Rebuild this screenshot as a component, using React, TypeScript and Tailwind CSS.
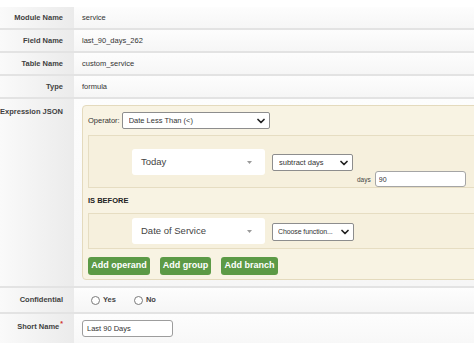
import type { ReactNode } from "react";

// Small chevron used by the native-looking selects
function Chevron() {
  return (
    <svg
      className="pointer-events-none absolute top-1/2 right-[5px] -translate-y-1/2"
      width="8"
      height="6"
      viewBox="0 0 8 6"
    >
      <path d="M1 1.5 L4 4.5 L7 1.5" fill="none" stroke="#222" strokeWidth="1.7" strokeLinecap="round" strokeLinejoin="round" />
    </svg>
  );
}

type SelectBoxProps = {
  value: string;
  className: string;
};

function SelectBox({ value, className }: SelectBoxProps) {
  return (
    <div className={`relative shrink-0 ${className}`}>
      <select
        className="h-full w-full appearance-none rounded-[2px] border border-[#8d8d8d] bg-white pr-[14px] pl-[6px] text-[7.5px] text-[#333] outline-none"
        defaultValue={value}
      >
        <option>{value}</option>
      </select>
      <Chevron />
    </div>
  );
}

function OperandBox({ label }: { label: string }) {
  return (
    <div className="relative flex h-[26px] w-[133px] shrink-0 items-center rounded-[3px] bg-white pl-[9px] text-[9.5px] text-[#444]">
      {label}
      <svg className="absolute top-[12px] right-[13px]" width="5" height="3" viewBox="0 0 5 3">
        <path d="M0 0 L5 0 L2.5 3 Z" fill="#9a9a9a" />
      </svg>
    </div>
  );
}

type RowProps = {
  label: string;
  children?: ReactNode;
  height: string;
  required?: boolean;
  top?: boolean;
};

function Row({ label, children, height, required, top }: RowProps) {
  return (
    <div className={`flex border-b-2 border-[#e3e3e3] ${height}`}>
      <div
        className={`flex w-[74px] shrink-0 justify-end bg-gradient-to-r from-[#fafafa] to-[#ebebeb] pr-[11px] text-[7.5px] font-bold whitespace-nowrap text-[#3f3f3f] ${
          top ? "items-start pt-[7px]" : "items-center"
        }`}
      >
        <span>
          {label}
          {required && <sup className="ml-[1px] text-[7px] text-[#d0342c]">*</sup>}
        </span>
      </div>
      <div className={`flex min-w-0 flex-1 bg-gradient-to-b from-[#fdfdfd] to-[#f6f6f6] pl-[8px] text-[7.5px] text-[#333] ${top ? "items-start" : "items-center"}`}>
        {children}
      </div>
    </div>
  );
}

function GreenButton({ children, w }: { children: ReactNode; w: string }) {
  return (
    <button className={`flex h-[18px] ${w} items-center justify-center rounded-[3px] bg-[#5c9a46] text-[9px] font-bold text-white`}>
      {children}
    </button>
  );
}

export default function App() {
  return (
    <div className="h-[343px] w-[474px] overflow-hidden bg-white pt-[7px] font-['Liberation_Sans',Arial,sans-serif]">
      <Row label="Module Name" height="h-[23px]">service</Row>
      <Row label="Field Name" height="h-[23px]">last_90_days_262</Row>
      <Row label="Table Name" height="h-[23px]">custom_service</Row>
      <Row label="Type" height="h-[23px]">
        <span className="text-[#333]">formula</span>
      </Row>

      <Row label="Expression JSON" height="h-[189px]" top>
        <div className="mt-[6px] h-[175px] w-[400px] shrink-0 rounded-[4px] border border-[#e4dabd] bg-[#f8f3e3]">
          {/* Operator bar */}
          <div className="flex h-[29px] items-center pl-[5px]">
            <span className="mr-[2px] text-[7.5px] text-[#333]">Operator:</span>
            <SelectBox value="Date Less Than (<)" className="h-[17px] w-[148px]" />
          </div>

          {/* Left operand */}
          <div className="ml-[5px] flex h-[53px] border border-[#e6ddc2] bg-[#f6f0dd] pt-[13px] pl-[43px]">
            <OperandBox label="Today" />
            <SelectBox value="subtract days" className="mt-[5px] ml-[7px] h-[17px] w-[81px]" />
            <div className="mt-[16px] ml-[4px] flex items-end">
              <span className="mr-[4px] mb-[2px] text-[6.5px] text-[#444]">days</span>
              <input
                className="h-[16px] w-[91px] rounded-[3px] border border-[#a5a5a5] bg-white pl-[3px] text-[7px] text-[#333] outline-none"
                defaultValue="90"
              />
            </div>
          </div>

          <div className="flex h-[25px] items-center pl-[5px] text-[7.5px] font-bold text-[#222]">IS BEFORE</div>

          {/* Right operand */}
          <div className="ml-[5px] flex h-[36px] border border-[#e6ddc2] bg-[#f6f0dd] pt-[4px] pl-[43px]">
            <OperandBox label="Date of Service" />
            <div className="relative mt-[5px] ml-[7px] h-[18px] w-[82px] shrink-0">
              <select
                className="h-full w-full appearance-none rounded-[2px] border border-[#8d8d8d] bg-white pr-[12px] pl-[5px] text-[7px] tracking-[-0.1px] text-[#333] outline-none"
                defaultValue="Choose function..."
              >
                <option>Choose function...</option>
              </select>
              <Chevron />
            </div>
          </div>

          <div className="mt-[8px] ml-[5px] flex gap-[10px]">
            <GreenButton w="w-[62px]">Add operand</GreenButton>
            <GreenButton w="w-[51px]">Add group</GreenButton>
            <GreenButton w="w-[57px]">Add branch</GreenButton>
          </div>
        </div>
      </Row>

      <Row label="Confidential" height="h-[26px]">
        <label className="ml-[9px] flex items-center font-bold text-[#444]">
          <span className="mr-[3px] h-[9px] w-[9px] rounded-full border border-[#7a7a7a] bg-white" />
          Yes
        </label>
        <label className="ml-[18px] flex items-center font-bold text-[#444]">
          <span className="mr-[3px] h-[9px] w-[9px] rounded-full border border-[#7a7a7a] bg-white" />
          No
        </label>
      </Row>

      <Row label="Short Name" height="h-[40px]" required top>
        <input
          className="mt-[6px] h-[17px] w-[91px] rounded-[3px] border border-[#9d9d9d] bg-white pl-[4px] text-[7.5px] text-[#333] outline-none"
          defaultValue="Last 90 Days"
        />
      </Row>
    </div>
  );
}
